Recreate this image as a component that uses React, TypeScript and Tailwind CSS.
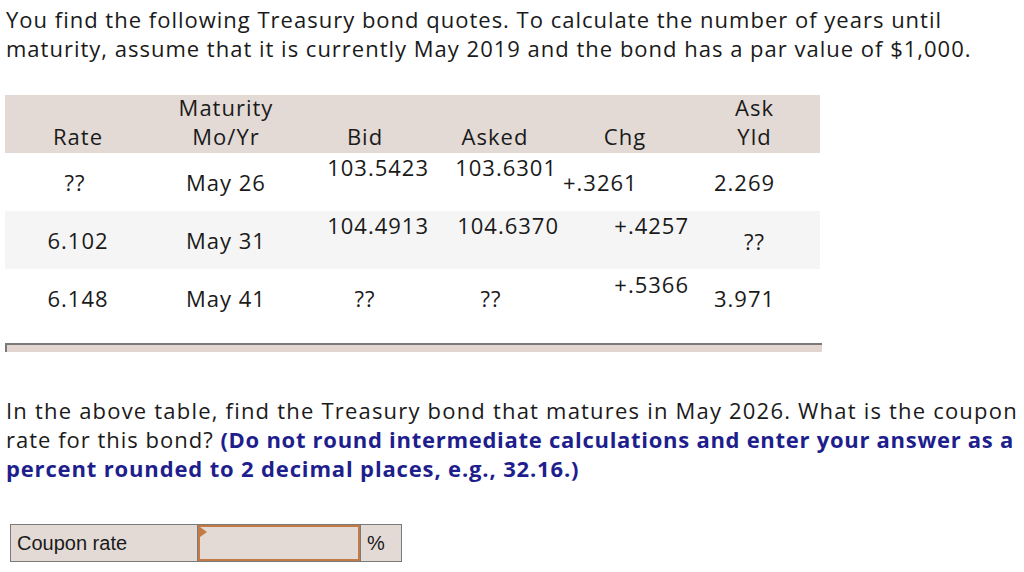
import React from "react";

const F = { fontFamily: "'Open Sans', 'Noto Sans', sans-serif" };

export default function App() {
  return (
    <div className="w-[1024px] h-[572px] bg-white text-[#1a1a1a] relative overflow-hidden tracking-[1px]" style={F}>
      <div className="pl-[6px] pt-[5px] text-[22px] leading-[29px] whitespace-nowrap">
        <p>You find the following Treasury bond quotes. To calculate the number of years until</p>
        <p>maturity, assume that it is currently May 2019 and the bond has a par value of $1,000.</p>
      </div>

      <div className="ml-[5px] mt-[32px] w-[815px] text-[22px] leading-[29px] whitespace-nowrap">
        <div className="flex h-[58px] bg-[#e3dad6]">
          <div className="w-[146px] flex items-end justify-center pb-[2px]">Rate</div>
          <div className="w-[150px] flex flex-col items-center justify-end pb-[2px]"><span>Maturity</span><span>Mo/Yr</span></div>
          <div className="w-[128px] flex items-end justify-center pb-[2px]">Bid</div>
          <div className="w-[132px] flex items-end justify-center pb-[2px]">Asked</div>
          <div className="w-[128px] flex items-end justify-center pb-[2px]">Chg</div>
          <div className="flex-1 flex flex-col items-center justify-end pb-[2px]"><span>Ask</span><span>Yld</span></div>
        </div>
        <div className="flex h-[58px] bg-white">
          <div className="w-[146px] flex justify-center pt-[15px] pr-[6px]">??</div>
          <div className="w-[150px] flex justify-center pt-[15px]">May 26</div>
          <div className="w-[128px] flex justify-end pt-[0px]">103.5423</div>
          <div className="w-[132px] flex justify-end pt-[0px] pr-[4px]">103.6301</div>
          <div className="w-[128px] flex justify-start pt-[15px] pl-[2px]">+.3261</div>
          <div className="flex-1 flex justify-center pt-[15px] pr-[20px]">2.269</div>
        </div>
        <div className="flex h-[58px] bg-[#f5f5f5]">
          <div className="w-[146px] flex justify-center pt-[15px]">6.102</div>
          <div className="w-[150px] flex justify-center pt-[15px]">May 31</div>
          <div className="w-[128px] flex justify-end pt-[0px]">104.4913</div>
          <div className="w-[132px] flex justify-end pt-[0px] pr-[2px]">104.6370</div>
          <div className="w-[128px] flex justify-end pt-[0px]">+.4257</div>
          <div className="flex-1 flex justify-center pt-[16px]">??</div>
        </div>
        <div className="flex h-[58px] bg-white">
          <div className="w-[146px] flex justify-center pt-[15px]">6.148</div>
          <div className="w-[150px] flex justify-center pt-[15px]">May 41</div>
          <div className="w-[128px] flex justify-center pt-[15px]">??</div>
          <div className="w-[132px] flex justify-center pt-[15px] pr-[8px]">??</div>
          <div className="w-[128px] flex justify-end pt-[1px]">+.5366</div>
          <div className="flex-1 flex justify-center pt-[15px] pr-[20px]">3.971</div>
        </div>
      </div>
      <div className="ml-[5px] mt-[16px] w-[817px] h-[9px] bg-[#e3d5d0] border-t-2 border-l-2 border-[#7a7a7a]"></div>

      <div className="pl-[6px] mt-[44px] text-[22px] leading-[29px] whitespace-nowrap">
        <p className="tracking-[1.2px]">In the above table, find the Treasury bond that matures in May 2026. What is the coupon</p>
        <p>rate for this bond? <span className="font-bold text-[#1e1e8c] tracking-[0.72px]">(Do not round intermediate calculations and enter your answer as a</span></p>
        <p className="font-bold text-[#1e1e8c] tracking-[0.85px]">percent rounded to 2 decimal places, e.g., 32.16.)</p>
      </div>

      <div className="ml-[10px] mt-[41px] flex h-[38px] w-[392px] border border-[#7a7a7a] bg-[#e3dad6] text-[20px] tracking-normal" style={{ fontFamily: "'Liberation Sans', Arial, sans-serif" }}>
        <div className="w-[187px] flex items-center pl-[6px] border-r border-[#7a7a7a]">Coupon rate</div>
        <div className="relative w-[162px] border-2 border-[#c47a45]">
          <div className="absolute left-0 top-0 w-0 h-0 border-t-[5px] border-b-[5px] border-l-[7px] border-t-transparent border-b-transparent border-l-[#c47a45]"></div>
        </div>
        <div className="flex-1 flex items-center pl-[6px] border-l border-[#7a7a7a]">%</div>
      </div>
    </div>
  );
}
